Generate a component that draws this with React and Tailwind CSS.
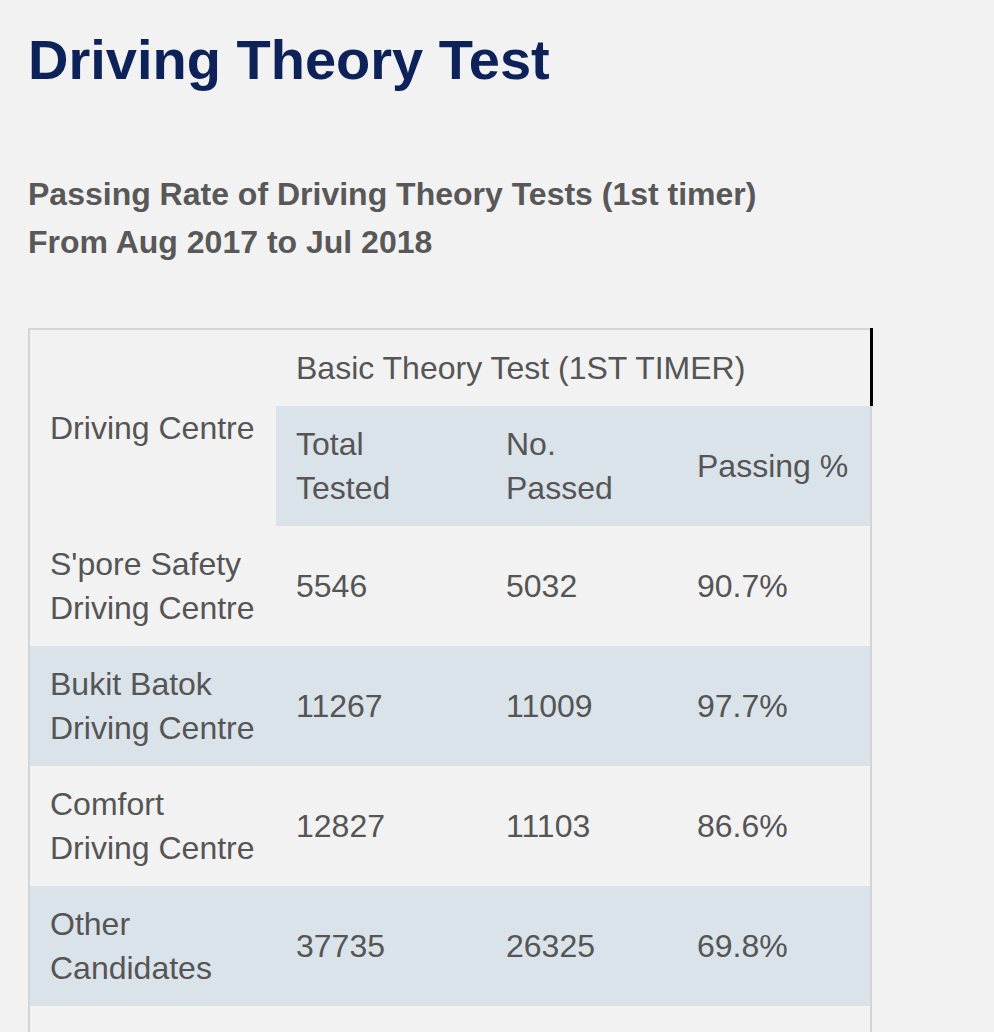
import React from "react";

const rows = [
  { name: ["S'pore Safety", "Driving Centre"], tested: "5546", passed: "5032", rate: "90.7%" },
  { name: ["Bukit Batok", "Driving Centre"], tested: "11267", passed: "11009", rate: "97.7%", shade: true },
  { name: ["Comfort", "Driving Centre"], tested: "12827", passed: "11103", rate: "86.6%" },
  { name: ["Other", "Candidates"], tested: "37735", passed: "26325", rate: "69.8%", shade: true },
];

export default function App() {
  return (
    <div className="min-h-[1032px] bg-[#f2f2f2] pl-[28px] font-['Liberation_Sans',Arial,Helvetica,sans-serif] text-[#555555]">
      <h1 className="pt-[32px] text-[56px] leading-[56px] font-bold text-[#0d2259]">Driving Theory Test</h1>

      <p className="mt-[82px] text-[32px] leading-[48px] font-bold text-[#585858]">
        Passing Rate of Driving Theory Tests (1st timer)
        <br />
        From Aug 2017 to Jul 2018
      </p>

      <table className="mt-[62px] w-[842px] table-fixed border-collapse border-2 border-[#d4d4d4] text-[32px] leading-[44px]">
        <colgroup>
          <col className="w-[247px]" />
          <col className="w-[210px]" />
          <col className="w-[191px]" />
          <col className="w-[194px]" />
        </colgroup>
        <thead>
          <tr className="h-[76px]">
            <th rowSpan={2} className="px-5 py-4 text-left align-middle font-normal">
              Driving Centre
            </th>
            <th colSpan={3} className="border-r-[3px] border-black px-5 py-4 text-left align-middle font-normal">
              Basic Theory Test (1ST TIMER)
            </th>
          </tr>
          <tr className="h-[120px]">
            <th className="bg-[#dae2ea] px-5 py-4 text-left align-middle font-normal">
              Total
              <br />
              Tested
            </th>
            <th className="bg-[#dae2ea] px-5 py-4 text-left align-middle font-normal">
              No.
              <br />
              Passed
            </th>
            <th className="bg-[#dae2ea] px-5 py-4 text-left align-middle font-normal">Passing %</th>
          </tr>
        </thead>
        <tbody>
          {rows.map((r) => (
            <tr key={r.tested} className={r.shade ? "h-[120px] bg-[#dae2ea]" : "h-[120px]"}>
              <td className="px-5 py-4 align-middle">
                {r.name[0]}
                <br />
                {r.name[1]}
              </td>
              <td className="px-5 py-4 align-middle">{r.tested}</td>
              <td className="px-5 py-4 align-middle">{r.passed}</td>
              <td className="px-5 py-4 align-middle">{r.rate}</td>
            </tr>
          ))}
          <tr className="h-[120px]">
            <td className="px-5 py-4"></td>
            <td className="px-5 py-4"></td>
            <td className="px-5 py-4"></td>
            <td className="px-5 py-4"></td>
          </tr>
        </tbody>
      </table>
    </div>
  );
}
